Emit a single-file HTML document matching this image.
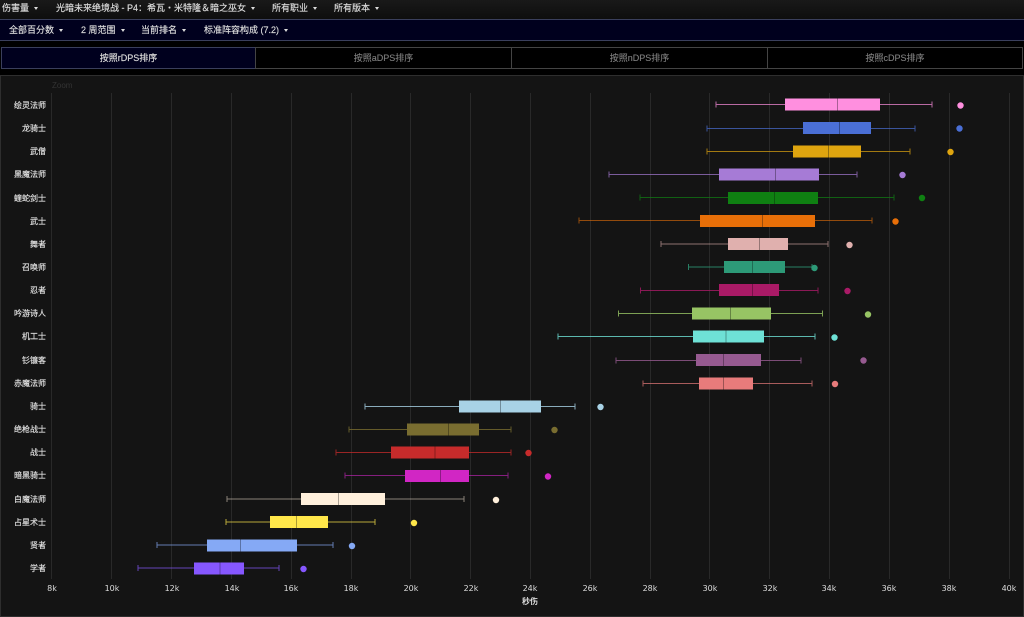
<!DOCTYPE html>
<html lang="zh">
<head>
<meta charset="utf-8">
<style>
html,body{margin:0;padding:0;background:#000;width:1024px;height:617px;overflow:hidden;font-family:"Liberation Sans","Noto Sans CJK SC",sans-serif;}
.bar{position:absolute;left:0;width:1024px;box-sizing:border-box;color:#ddd;font-size:9px;white-space:nowrap;-webkit-text-stroke:.15px #ddd;}
.bar span{position:absolute;top:0;}
.bar span:after{content:"";display:inline-block;border-left:2.5px solid transparent;border-right:2.5px solid transparent;border-top:3px solid #ddd;margin-left:5px;vertical-align:1px;}
#top{top:0;height:19px;line-height:17px;background:linear-gradient(#191919,#0e0e0e);}
#nav{top:19px;height:22px;line-height:21px;background:#00001e;border-top:1px solid #3a3f5c;border-bottom:1px solid #3a3f5c;}
.tab{position:absolute;top:47px;height:22px;box-sizing:border-box;border:1px solid #444;background:#000;color:#808080;font-size:9px;line-height:20px;text-align:center;-webkit-text-stroke:.1px #808080;}
.tab.a{background:#00001e;color:#ddd;border-color:#3a3f5c;-webkit-text-stroke:.15px #ddd;}
#panel{position:absolute;left:0;top:75px;width:1024px;height:542px;box-sizing:border-box;background:#141414;border:1px solid #2e2e2e;}
svg{position:absolute;left:0;top:0;}
</style>
</head>
<body>
<div class="bar" id="top">
<span style="left:2px">伤害量</span>
<span style="left:56px">光暗未来绝境战 - P4：希瓦・米特隆＆暗之巫女</span>
<span style="left:272px">所有职业</span>
<span style="left:334px">所有版本</span>
</div>
<div class="bar" id="nav">
<span style="left:9px">全部百分数</span>
<span style="left:81px">2 周范围</span>
<span style="left:141px">当前排名</span>
<span style="left:204px">标准阵容构成 (7.2)</span>
</div>
<div class="tab a" style="left:1px;width:255px">按照rDPS排序</div>
<div class="tab" style="left:255px;width:257px">按照aDPS排序</div>
<div class="tab" style="left:511px;width:257px">按照nDPS排序</div>
<div class="tab" style="left:767px;width:256px">按照cDPS排序</div>
<div id="panel"></div>
<svg width="1024" height="617" viewBox="0 0 1024 617" xmlns="http://www.w3.org/2000/svg">
<text x="52" y="88" font-size="8" fill="#333" font-family="Liberation Sans">Zoom</text>
<g stroke="#292929" stroke-width="1">
<path d="M51.5 93V579M111.5 93V579M171.5 93V579M231.5 93V579M291.5 93V579M351.5 93V579M410.5 93V579M470.5 93V579M530.5 93V579M590.5 93V579M650.5 93V579M709.5 93V579M769.5 93V579M829.5 93V579M889.5 93V579M949.5 93V579M1009.5 93V579"/>
</g>
<g font-family="'DejaVu Sans',sans-serif" font-size="8" fill="#ddd" text-anchor="middle">
<text x="52" y="591">8k</text><text x="112" y="591">10k</text><text x="172" y="591">12k</text><text x="232" y="591">14k</text><text x="291" y="591">16k</text><text x="351" y="591">18k</text><text x="411" y="591">20k</text><text x="471" y="591">22k</text><text x="530" y="591">24k</text><text x="590" y="591">26k</text><text x="650" y="591">28k</text><text x="710" y="591">30k</text><text x="770" y="591">32k</text><text x="829" y="591">34k</text><text x="889" y="591">36k</text><text x="949" y="591">38k</text><text x="1009" y="591">40k</text>
</g>
<text x="530" y="604" font-size="8" font-weight="bold" fill="#ddd" text-anchor="middle" font-family="'Liberation Sans','Noto Sans CJK SC',sans-serif">秒伤</text>
<g font-family="'Liberation Sans','Noto Sans CJK SC',sans-serif" font-size="8" fill="#ddd" stroke="#ddd" stroke-width=".2" text-anchor="end">
<text x="46" y="108">绘灵法师</text><text x="46" y="131">龙骑士</text><text x="46" y="154">武僧</text><text x="46" y="177">黑魔法师</text><text x="46" y="201">蝰蛇剑士</text><text x="46" y="224">武士</text><text x="46" y="247">舞者</text><text x="46" y="270">召唤师</text><text x="46" y="293">忍者</text><text x="46" y="316">吟游诗人</text><text x="46" y="339">机工士</text><text x="46" y="363">钐镰客</text><text x="46" y="386">赤魔法师</text><text x="46" y="409">骑士</text><text x="46" y="432">绝枪战士</text><text x="46" y="455">战士</text><text x="46" y="478">暗黑骑士</text><text x="46" y="502">白魔法师</text><text x="46" y="525">占星术士</text><text x="46" y="548">贤者</text><text x="46" y="571">学者</text>
</g>
<g id="rows">
<g fill="#ff8fdf" stroke="#ff8fdf"><path d="M716 104.5H785M880 104.5H932M716 101.5v6M932 101.5v6" fill="none" opacity=".7"/><rect x="785" y="98.5" width="95" height="12" stroke="none"/><path d="M837.5 98.5v12" stroke="#a85f95"/><circle cx="960.5" cy="105.5" r="3.2" stroke="none"/></g>
<g fill="#4a6fd6" stroke="#4a6fd6"><path d="M707 128.5H803M871 128.5H915M707 125.5v6M915 125.5v6" fill="none" opacity=".7"/><rect x="803" y="122" width="68" height="12" stroke="none"/><path d="M839.5 122v12" stroke="#30498c"/><circle cx="959.5" cy="128.5" r="3.2" stroke="none"/></g>
<g fill="#dfa50f" stroke="#dfa50f"><path d="M707 151.5H793M861 151.5H910M707 148.5v6M910 148.5v6" fill="none" opacity=".7"/><rect x="793" y="145.5" width="68" height="12" stroke="none"/><path d="M828.5 145.5v12" stroke="#93700e"/><circle cx="950.5" cy="152" r="3.2" stroke="none"/></g>
<g fill="#a67bd6" stroke="#a67bd6"><path d="M609 174.5H719M819 174.5H857M857 171.5v6M609 171.5v6" fill="none" opacity=".7"/><rect x="719" y="168.5" width="100" height="12" stroke="none"/><path d="M775.5 168.5v12" stroke="#70538f"/><circle cx="902.5" cy="175" r="3.2" stroke="none"/></g>
<g fill="#0f8012" stroke="#0f8012"><path d="M640 197.5H728M818 197.5H894M640 194.5v6M894 194.5v6" fill="none" opacity=".7"/><rect x="728" y="192" width="90" height="12" stroke="none"/><path d="M774.5 192v12" stroke="#0c5a0e"/><circle cx="922" cy="198" r="3.2" stroke="none"/></g>
<g fill="#e86f08" stroke="#e86f08"><path d="M579 220.5H700M815 220.5H872M579 217.5v6M872 217.5v6" fill="none" opacity=".6"/><rect x="700" y="215" width="115" height="12" stroke="none"/><path d="M762.5 215v12" stroke="#9c4d0a"/><circle cx="895.5" cy="221.5" r="3.2" stroke="none"/></g>
<g fill="#e0b0ae" stroke="#e0b0ae"><path d="M661 244H728M788 244H828M661 241v6M828 241v6" fill="none" opacity=".6"/><rect x="728" y="238" width="60" height="12" stroke="none"/><path d="M759.5 238v12" stroke="#957675"/><circle cx="849.5" cy="245" r="3.2" stroke="none"/></g>
<g fill="#2d9a78" stroke="#2d9a78"><path d="M688 267H724M785 267H812M688.5 264v6M812 264v6" fill="none" opacity=".8"/><rect x="724" y="261" width="61" height="12" stroke="none"/><path d="M752.5 261v12" stroke="#1f6b53"/><circle cx="814.5" cy="268" r="3.2" stroke="none"/></g>
<g fill="#a91a66" stroke="#a91a66"><path d="M640 290.5H719M779 290.5H818M640.5 287.5v6M818 287.5v6" fill="none" opacity=".8"/><rect x="719" y="284" width="60" height="12" stroke="none"/><path d="M752.5 284v12" stroke="#751247"/><circle cx="847.5" cy="291" r="3.2" stroke="none"/></g>
<g fill="#97c464" stroke="#97c464"><path d="M618 313.5H692M771 313.5H823M618.5 310.5v6M822.5 310.5v6" fill="none" opacity=".8"/><rect x="692" y="307.5" width="79" height="12" stroke="none"/><path d="M730.5 307.5v12" stroke="#658443"/><circle cx="868" cy="314.5" r="3.2" stroke="none"/></g>
<g fill="#6ee1d6" stroke="#6ee1d6"><path d="M558 336.5H693M764 336.5H815M558 333.5v6M815 333.5v6" fill="none" opacity=".8"/><rect x="693" y="330.5" width="71" height="12" stroke="none"/><path d="M726 330.5v12" stroke="#4a9890"/><circle cx="834.5" cy="337.5" r="3.2" stroke="none"/></g>
<g fill="#965a90" stroke="#965a90"><path d="M616 360.5H696M761 360.5H801M616 357.5v6M801 357.5v6" fill="none" opacity=".8"/><rect x="696" y="354" width="65" height="12" stroke="none"/><path d="M723.5 354v12" stroke="#673d63"/><circle cx="863.5" cy="360.5" r="3.2" stroke="none"/></g>
<g fill="#e87b7b" stroke="#e87b7b"><path d="M643 383.5H699M753 383.5H812M643 380.5v6M812 380.5v6" fill="none" opacity=".7"/><rect x="699" y="377.5" width="54" height="12" stroke="none"/><path d="M723.5 377.5v12" stroke="#9c5353"/><circle cx="835" cy="384" r="3.2" stroke="none"/></g>
<g fill="#a8d2e6" stroke="#a8d2e6"><path d="M365 406.5H459M541 406.5H575M365 403.5v6M575 403.5v6" fill="none" opacity=".8"/><rect x="459" y="400.5" width="82" height="12" stroke="none"/><path d="M500.5 400.5v12" stroke="#718d9b"/><circle cx="600.5" cy="407" r="3.2" stroke="none"/></g>
<g fill="#796d30" stroke="#796d30"><path d="M349 429.5H407M479 429.5H511M349 426.5v6M511 426.5v6" fill="none" opacity=".8"/><rect x="407" y="423.5" width="72" height="12" stroke="none"/><path d="M448.5 423.5v12" stroke="#524a20"/><circle cx="554.5" cy="430" r="3.2" stroke="none"/></g>
<g fill="#c72b2b" stroke="#c72b2b"><path d="M336 452.5H391M469 452.5H511M336 449.5v6M511 449.5v6" fill="none" opacity=".75"/><rect x="391" y="446.5" width="78" height="12" stroke="none"/><path d="M435 446.5v12" stroke="#871d1d"/><circle cx="528.5" cy="453" r="3.2" stroke="none"/></g>
<g fill="#d126c4" stroke="#d126c4"><path d="M345 475.5H405M469 475.5H508M345 472.5v6M508 472.5v6" fill="none" opacity=".6"/><rect x="405" y="470" width="64" height="12" stroke="none"/><path d="M440.5 470v12" stroke="#8d1a85"/><circle cx="548" cy="476.5" r="3.2" stroke="none"/></g>
<g fill="#fff0dc" stroke="#fff0dc"><path d="M227 499H301M385 499H464M227 496v6M464 496v6" fill="none" opacity=".5"/><rect x="301" y="493" width="84" height="12" stroke="none"/><path d="M338.5 493v12" stroke="#aca294"/><circle cx="496" cy="500" r="3.2" stroke="none"/></g>
<g fill="#ffe74a" stroke="#ffe74a"><path d="M226 522H270M328 522H375M226 519v6M375 519v6" fill="none" opacity=".7"/><rect x="270" y="516" width="58" height="12" stroke="none"/><path d="M296.5 516v12" stroke="#ac9c32"/><circle cx="414" cy="523" r="3.2" stroke="none"/></g>
<g fill="#85a9f5" stroke="#85a9f5"><path d="M157 545H207M297 545H333M157 542v6M333 542v6" fill="none" opacity=".7"/><rect x="207" y="539.5" width="90" height="12" stroke="none"/><path d="M240.5 539.5v12" stroke="#5a72a6"/><circle cx="352" cy="546" r="3.2" stroke="none"/></g>
<g fill="#8657ff" stroke="#8657ff"><path d="M138 568H194M244 568H279M138 565v6M279 565v6" fill="none" opacity=".7"/><rect x="194" y="562.5" width="50" height="12" stroke="none"/><path d="M220 562.5v12" stroke="#5b3bac"/><circle cx="303.5" cy="569" r="3.2" stroke="none"/></g>
</g>
</svg>
</body>
</html>
